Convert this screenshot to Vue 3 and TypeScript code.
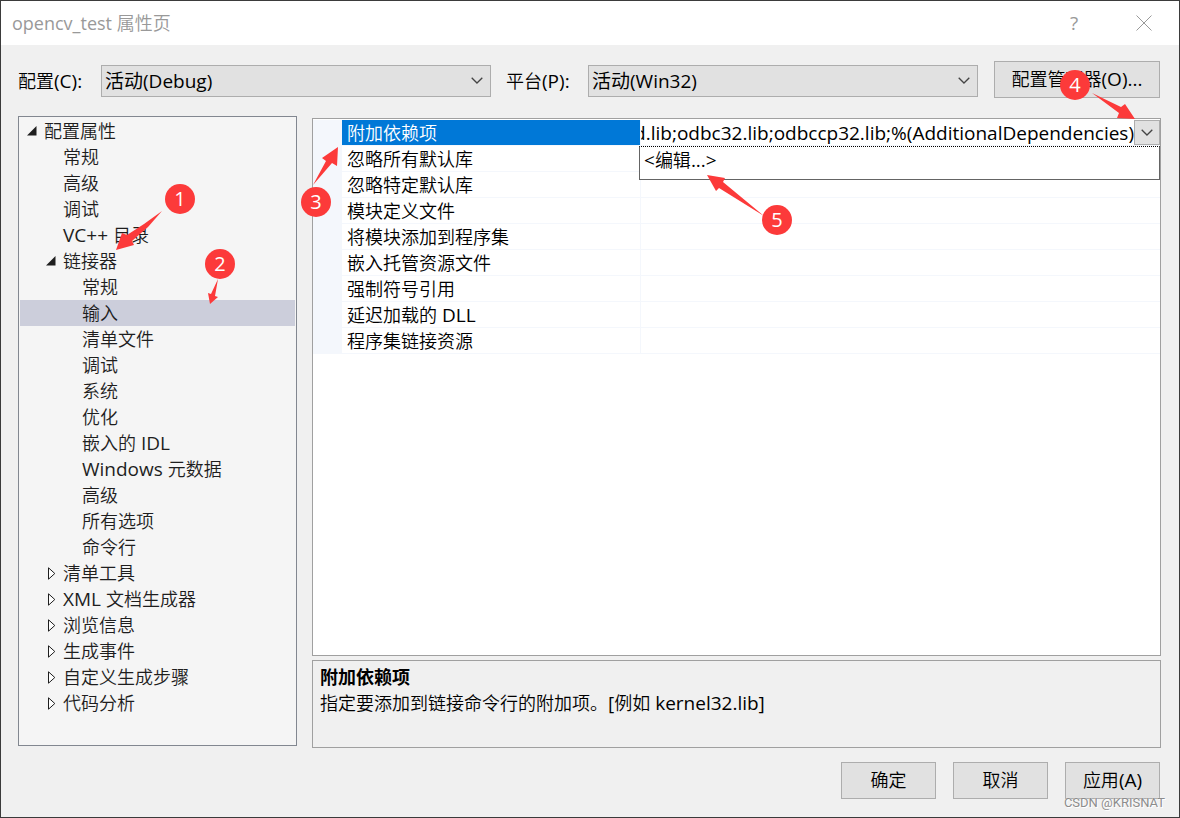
<script setup lang="ts">
import { h, onMounted, ref } from 'vue'
import type { FunctionalComponent } from 'vue'

interface TreeItem {
  label: string
  level: number
  state?: 'open' | 'closed'
}

interface Marker {
  label: string
  left: number
  top: number
}

/* Sets Latin runs slightly larger than the Chinese text around them. */
const MixedText: FunctionalComponent<{ text: string }> = (props) =>
  h(
    'span',
    { class: 'mixed' },
    (props.text.match(/[\x20-\x7e]+|[^\x20-\x7e]+/g) ?? []).map((run) =>
      /^[\x20-\x7e]/.test(run) ? h('span', { class: 'latin' }, run) : run,
    ),
  )
MixedText.props = ['text']

const tree: TreeItem[] = [
  { label: '配置属性', level: 0, state: 'open' },
  { label: '常规', level: 1 },
  { label: '高级', level: 1 },
  { label: '调试', level: 1 },
  { label: 'VC++ 目录', level: 1 },
  { label: '链接器', level: 1, state: 'open' },
  { label: '常规', level: 2 },
  { label: '输入', level: 2 },
  { label: '清单文件', level: 2 },
  { label: '调试', level: 2 },
  { label: '系统', level: 2 },
  { label: '优化', level: 2 },
  { label: '嵌入的 IDL', level: 2 },
  { label: 'Windows 元数据', level: 2 },
  { label: '高级', level: 2 },
  { label: '所有选项', level: 2 },
  { label: '命令行', level: 2 },
  { label: '清单工具', level: 1, state: 'closed' },
  { label: 'XML 文档生成器', level: 1, state: 'closed' },
  { label: '浏览信息', level: 1, state: 'closed' },
  { label: '生成事件', level: 1, state: 'closed' },
  { label: '自定义生成步骤', level: 1, state: 'closed' },
  { label: '代码分析', level: 1, state: 'closed' },
]
const selected = ref(7)

const properties: string[] = [
  '附加依赖项',
  '忽略所有默认库',
  '忽略特定默认库',
  '模块定义文件',
  '将模块添加到程序集',
  '嵌入托管资源文件',
  '强制符号引用',
  '延迟加载的 DLL',
  '程序集链接资源',
]

const config = ref('活动(Debug)')
const platform = ref('活动(Win32)')
const dependencies = ref('uuid.lib;odbc32.lib;odbccp32.lib;%(AdditionalDependencies)')
const valueBox = ref<HTMLInputElement[]>([])

const markers: Marker[] = [
  { label: '1', left: 165, top: 184 },
  { label: '2', left: 205, top: 249 },
  { label: '3', left: 301, top: 187 },
  { label: '4', left: 1060, top: 70 },
  { label: '5', left: 762, top: 205 },
]

const arrows: string[] = [
  '162,211 144,224 127,235 122,233 116,250 134,245 132,241 148,227',
  '218,279 211,294 208,293 210,304 218,297 215,296',
  '313,185 326,161 322,158 338,147 337,166 332,163',
  '1092,93 1121,107 1125,104 1135,119 1117,118 1119,113',
  '764,216 723,182 725,178 707,175 716,191 719,188',
]

onMounted(() => {
  const box = valueBox.value[0]
  if (box) box.scrollLeft = box.scrollWidth
})
</script>

<template>
  <div class="window">
    <header class="titlebar">
      <h1><MixedText text="opencv_test 属性页" /></h1>
      <button type="button" class="caption help" aria-label="帮助">?</button>
      <button type="button" class="caption" aria-label="关闭">
        <svg width="16" height="16" viewBox="0 0 16 16"><path d="M.5 .5 15.5 15.5M15.5 .5 .5 15.5" /></svg>
      </button>
    </header>

    <div class="toolbar">
      <label for="config" class="config-label"><MixedText text="配置(C):" /></label>
      <div class="combo">
        <select id="config" v-model="config"><option>活动(Debug)</option></select>
        <svg class="chevron" width="12" height="7" viewBox="0 0 12 7"><path d="M.7 .7 6 6 11.3 .7" /></svg>
      </div>
      <label for="platform" class="platform-label"><MixedText text="平台(P):" /></label>
      <div class="combo">
        <select id="platform" v-model="platform"><option>活动(Win32)</option></select>
        <svg class="chevron" width="12" height="7" viewBox="0 0 12 7"><path d="M.7 .7 6 6 11.3 .7" /></svg>
      </div>
      <button type="button" class="push manager"><MixedText text="配置管理器(O)..." /></button>
    </div>

    <main class="content">
      <ul class="tree" role="tree">
        <li
          v-for="(item, i) in tree"
          :key="i"
          role="treeitem"
          :aria-selected="i === selected"
          :class="['node', `level-${item.level}`, { selected: i === selected }]"
          @click="selected = i"
        >
          <span class="twisty">
            <svg v-if="item.state === 'open'" width="10" height="10" viewBox="0 0 10 10"><path class="solid" d="M9.5 0V9.5H0Z" /></svg>
            <svg v-else-if="item.state === 'closed'" class="closed" width="8" height="13" viewBox="0 0 8 13"><path class="hollow" d="M.5 .8V12.2L6.8 6.5Z" /></svg>
          </span>
          <MixedText :text="item.label" />
        </li>
      </ul>

      <div class="side">
        <div class="sheet">
          <table>
            <tbody>
              <tr v-for="(name, i) in properties" :key="name" :class="{ active: i === 0 }">
                <td class="gutter"></td>
                <th scope="row"><MixedText :text="name" /></th>
                <td class="value">
                  <div v-if="i === 0" class="editor">
                    <input ref="valueBox" v-model="dependencies" type="text" aria-label="附加依赖项" />
                    <button type="button" class="drop" aria-label="展开">
                      <svg class="arrow" width="12" height="7" viewBox="0 0 12 7"><path d="M.7 .7 6 6 11.3 .7" /></svg>
                    </button>
                    <div class="popup" role="listbox"><div role="option"><MixedText text="<编辑...>" /></div></div>
                  </div>
                </td>
              </tr>
            </tbody>
          </table>
        </div>
        <section class="description">
          <h2>附加依赖项</h2>
          <p><MixedText text="指定要添加到链接命令行的附加项。[例如 kernel32.lib]" /></p>
        </section>
      </div>
    </main>

    <footer class="actions">
      <button type="button" class="push">确定</button>
      <button type="button" class="push">取消</button>
      <button type="button" class="push"><MixedText text="应用(A)" /></button>
    </footer>

    <svg class="arrows" width="1180" height="818" viewBox="0 0 1180 818">
      <polygon v-for="points in arrows" :key="points" :points="points" />
    </svg>
    <span
      v-for="marker in markers"
      :key="marker.label"
      class="marker"
      :style="{ left: marker.left + 'px', top: marker.top + 'px' }"
    >{{ marker.label }}</span>
    <span class="watermark">CSDN @KRISNAT</span>
  </div>
</template>

<style>
body {
  margin: 0;
}
.mixed {
  white-space: pre;
}
.mixed .latin {
  font-size: 19px;
  font-weight: 400;
  line-height: 1;
}
.titlebar .mixed .latin {
  font-size: 18px;
}
</style>

<style scoped>
.window,
.window button,
.window input,
.window select {
  font-family: "Open Sans", "Noto Sans CJK SC", sans-serif;
  font-size: 18px;
  font-weight: 350;
  color: #000;
}
.window {
  position: relative;
  box-sizing: border-box;
  min-height: 100vh;
  display: flex;
  flex-direction: column;
  overflow: hidden;
  border: 1px solid #3b3b3b;
  background: #f0f0f0;
  line-height: 26px;
}
.window * {
  box-sizing: border-box;
}
h1,
h2,
p,
ul {
  margin: 0;
  padding: 0;
  font-size: 18px;
}
.titlebar {
  height: 44px;
  flex: none;
  display: flex;
  align-items: center;
  padding: 0 11px;
  background: #fff;
}
.titlebar h1 {
  flex: 1;
  font-weight: 350;
  color: #999;
}
.window .caption {
  width: 48px;
  height: 43px;
  padding: 0;
  border: 0;
  background: none;
  display: flex;
  align-items: center;
  justify-content: center;
  color: #999;
}
.window .help {
  width: 92px;
  font-size: 19px;
  font-weight: 400;
}
.caption path {
  fill: none;
  stroke: #999;
}
.toolbar {
  display: flex;
  align-items: center;
  padding: 16px 19px 18px 17px;
}
.toolbar label {
  padding-top: 2px;
}
.config-label {
  width: 83px;
}
.platform-label {
  width: 82px;
  margin-left: 15px;
}
.combo {
  position: relative;
  flex: 1;
  padding-top: 2px;
}
.window .combo select {
  display: block;
  width: 100%;
  height: 32px;
  padding: 0 3px;
  border: 1px solid #adadad;
  border-radius: 0;
  background: #e1e1e1;
  appearance: none;
  font-size: 19px;
}
.chevron {
  position: absolute;
  right: 8px;
  top: 14px;
  pointer-events: none;
}
.chevron path,
.arrow path {
  fill: none;
  stroke: #444;
  stroke-width: 1.3;
}
.window .combo select,
.window .editor input {
  font-weight: 400;
}
.push {
  width: 95px;
  height: 37px;
  padding: 0 0 3px;
  border: 1px solid #adadad;
  background: #e1e1e1;
}
.manager {
  width: 166px;
  margin-left: 16px;
}
.content {
  flex: 1;
  display: flex;
  gap: 15px;
  padding: 0 18px 0 17px;
}
.tree {
  width: 279px;
  flex: none;
  margin-bottom: 2px;
  padding: 1px;
  border: 1px solid #828790;
  background: #f5f5f5;
  list-style: none;
}
.node {
  height: 26px;
  display: flex;
  align-items: center;
  color: #1e1e1e;
}
.node.selected {
  background: #cccedb;
}
.level-1 {
  padding-left: 19px;
}
.level-2 {
  padding-left: 38px;
}
.twisty {
  width: 24px;
  flex: none;
  display: flex;
  padding-left: 7px;
}
.closed {
  margin-left: 2px;
}
.solid {
  fill: #1e1e1e;
}
.hollow {
  fill: #fff;
  stroke: #1e1e1e;
}
.side {
  flex: 1;
  min-width: 0;
  display: flex;
  flex-direction: column;
  gap: 4px;
  padding-top: 2px;
}
.sheet {
  flex: 1;
  padding-top: 1px;
  border: 1px solid #a0a0a0;
  background: #fff;
}
table {
  width: 100%;
  table-layout: fixed;
  border-collapse: separate;
  border-spacing: 0;
}
td,
th {
  height: 26px;
  padding: 0;
  border-bottom: 1px solid #f4f7fc;
  line-height: 24px;
  text-align: left;
  font-weight: 350;
}
.gutter {
  width: 29px;
  background: #f4f7fc;
}
th {
  width: 298px;
  padding: 1px 0 0 5px;
}
.value {
  border-left: 1px solid #f4f7fc;
}
.active th {
  background: #0078d7;
  color: #fff;
}
.editor {
  position: relative;
  display: flex;
}
.window .editor input {
  flex: 1;
  min-width: 0;
  height: 25px;
  padding: 1px 0 0;
  border: 0;
  outline: 0;
  background: none;
  font-size: 19px;
}
.drop {
  width: 26px;
  height: 25px;
  display: flex;
  align-items: center;
  justify-content: center;
  padding: 0;
  border: 1px solid #adadad;
  background: #e1e1e1;
}
.popup {
  position: absolute;
  z-index: 1;
  left: -2px;
  right: 0;
  top: 26px;
  height: 34px;
  padding: 0 4px;
  border: 1px solid #646464;
  border-top: 1px dotted #000;
  background: #fff;
  line-height: 27px;
}
.description {
  height: 88px;
  padding: 3px 7px;
  border: 1px solid #a0a0a0;
}
.description h2 {
  font-weight: 700;
}
.actions {
  display: flex;
  justify-content: flex-end;
  gap: 17px;
  padding: 14px 19px 18px;
}
.arrows {
  position: absolute;
  left: -1px;
  top: -1px;
  z-index: 2;
  pointer-events: none;
  fill: #fc3a3a;
}
.marker {
  position: absolute;
  z-index: 3;
  width: 30px;
  height: 30px;
  margin: -1px;
  border-radius: 50%;
  background: #fc3a3a;
  color: #fff;
  font-size: 20px;
  font-weight: 400;
  line-height: 29px;
  text-align: center;
}
.watermark {
  position: absolute;
  right: 14px;
  bottom: 5px;
  color: #8c8c8c;
  font-family: Roboto, sans-serif;
  font-size: 13px;
  font-weight: 400;
  line-height: 18px;
  text-shadow: 0 0 1px #fff, 1px 1px 0 #fff;
}
</style>
